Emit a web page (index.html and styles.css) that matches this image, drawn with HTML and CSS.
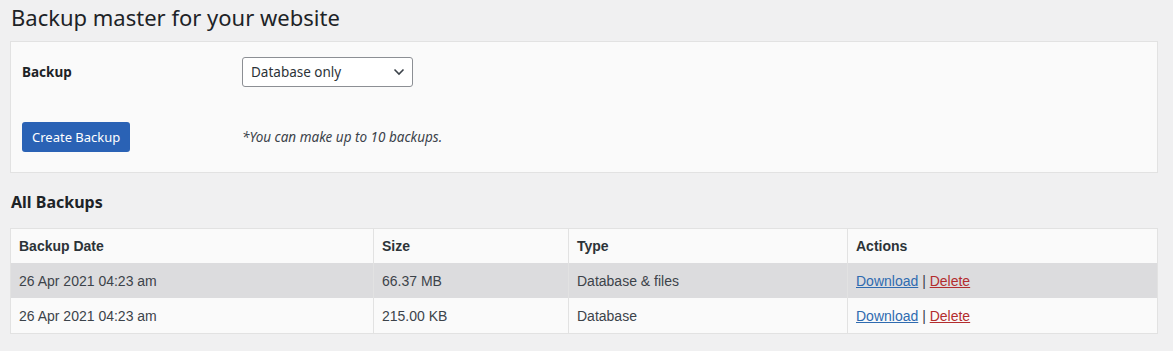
FILE: index.html
```html
<!DOCTYPE html>
<html lang="en">
<head>
    <meta charset="UTF-8"/>
    <title>Backup master</title>
    <link rel="stylesheet" href="styles.css">
</head>
<body>
<div class="wrap">
    <h1>Backup master for your website</h1>
    <div class="panel">
        <div class="form-row">
            <label for="backup-type" class="form-label">Backup</label>
            <div class="select-box">
                <select id="backup-type">
                    <option>Database only</option>
                    <option>Database &amp; files</option>
                </select>
                <svg class="chevron" width="12" height="8" viewBox="0 0 12 8">
                    <path d="M1.5 1.5 L6 6 L10.5 1.5" fill="none" stroke="#3c434a" stroke-width="1.6"/>
                </svg>
            </div>
        </div>
        <div class="form-row actions-row">
            <div class="form-label">
                <button id="create-backup">Create Backup</button>
            </div>
            <em class="note">*You can make up to 10 backups.</em>
        </div>
    </div>
    <h2>All Backups</h2>
    <table class="backups">
        <thead>
        <tr>
            <th class="col-date">Backup Date</th>
            <th class="col-size">Size</th>
            <th class="col-type">Type</th>
            <th>Actions</th>
        </tr>
        </thead>
        <tbody>
        <tr class="alt">
            <td>26 Apr 2021 04:23 am</td>
            <td>66.37 MB</td>
            <td>Database &amp; files</td>
            <td><a href="#" class="download">Download</a> | <a href="#" class="delete">Delete</a></td>
        </tr>
        <tr>
            <td>26 Apr 2021 04:23 am</td>
            <td>215.00 KB</td>
            <td>Database</td>
            <td><a href="#" class="download">Download</a> | <a href="#" class="delete">Delete</a></td>
        </tr>
        </tbody>
    </table>
</div>
</body>
</html>
```

FILE: styles.css
```css
body {
    margin: 0;
    background-color: #f0f0f1;
    color: #1d2327;
    font-family: "Noto Sans", "Open Sans", sans-serif;
}

.wrap {
    padding: 0 15px 0 10px;
}

h1 {
    font-size: 22px;
    font-weight: 400;
    margin: 0;
    padding: 4px 0 0 1px;
    line-height: 26px;
    color: #1d2327;
}

.panel {
    margin-top: 11px;
    background-color: #fafafa;
    border: 1px solid #e2e2e2;
    padding: 15px 11px 20px;
}

.form-row {
    display: flex;
    align-items: center;
}

.form-label {
    width: 220px;
    font-size: 13.5px;
    font-weight: bold;
    color: #1d2327;
}

.actions-row {
    margin-top: 35px;
}

.select-box {
    position: relative;
    width: 171px;
}

select {
    -webkit-appearance: none;
    appearance: none;
    width: 100%;
    height: 30px;
    padding: 0 24px 0 8px;
    border: 1px solid #8c8f94;
    border-radius: 3px;
    background-color: #fff;
    font-family: inherit;
    font-size: 13.5px;
    color: #2c3338;
}

.chevron {
    position: absolute;
    right: 8px;
    top: 11px;
    pointer-events: none;
}

#create-backup {
    background-color: #2a62b5;
    color: #fff;
    border: none;
    border-radius: 3px;
    font-family: inherit;
    font-size: 13px;
    font-weight: 400;
    height: 30px;
    padding: 0 10px;
    cursor: pointer;
}

.note {
    font-size: 13.5px;
    color: #3c434a;
}

h2 {
    font-size: 16px;
    font-weight: bold;
    margin: 19px 0 0 1px;
    line-height: 20px;
    color: #1d2327;
}

table.backups {
    margin-top: 16px;
    width: 100%;
    border-collapse: collapse;
    background-color: #fafafa;
    border: 1px solid #e2e2e2;
    font-family: "Liberation Sans", Arial, sans-serif;
    font-size: 14px;
    color: #3c434a;
}

table.backups th,
table.backups td {
    text-align: left;
    height: 35px;
    padding: 0 8px;
    border-left: 1px solid #e2e2e2;
}

table.backups th {
    height: 34px;
    font-weight: bold;
    color: #2c3338;
}

.col-date { width: 346px; }
.col-size { width: 178px; }
.col-type { width: 262px; }

table.backups tr.alt td {
    background-color: #dcdcde;
}

a.download {
    color: #2f6bb0;
}

a.delete {
    color: #b32d2e;
}
```
